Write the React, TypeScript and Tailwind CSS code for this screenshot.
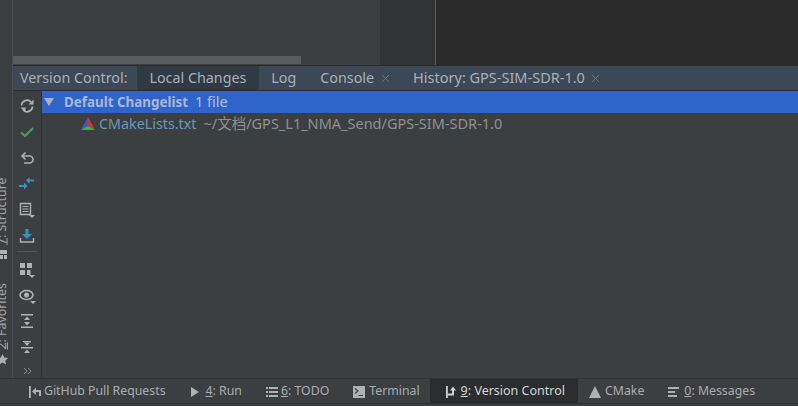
const font = { fontFamily: '"Noto Sans", "Noto Sans CJK SC", sans-serif' };

function Sync() {
  return (
    <svg width="16" height="16" viewBox="0 0 16 16" fill="none" stroke="#afb1b3" strokeWidth="1.700">
      <path d="M2.500 7.500A5.500 5.500 0 0 1 12 4" />
      <path d="M13.500 8.500A5.500 5.500 0 0 1 4 12" />
      <path d="M9.500 6.500h5v-5z" fill="#afb1b3" stroke="none" />
      <path d="M1.500 9.500h5v5z" fill="#afb1b3" stroke="none" />
    </svg>
  );
}
function Check() {
  return (
    <svg width="16" height="16" viewBox="0 0 16 16" fill="none" stroke="#499c54" strokeWidth="2.200">
      <path d="M2 8.500l4 3.500 8-8" />
    </svg>
  );
}
function Undo() {
  return (
    <svg width="16" height="16" viewBox="0 0 16 16" fill="none" stroke="#afb1b3" strokeWidth="1.600">
      <path d="M4 6h6.500a3.500 3.500 0 0 1 0 7H5" />
      <path d="M6.500 2.500L3 6l3.500 3.500" />
    </svg>
  );
}
function Merge() {
  return (
    <svg width="16" height="16" viewBox="0 0 16 16" fill="#3592c4">
      <path d="M0 9h5V6.500l3.500 3.500L5 13.500V11H0z" />
      <path d="M15 3.500h-4.500V1L7 4.500 10.500 8V5.500H15z" />
    </svg>
  );
}
function Note() {
  return (
    <svg width="16" height="16" viewBox="0 0 16 16" fill="none" stroke="#afb1b3">
      <path d="M1.500 1.500h10v11h-10z" strokeWidth="1.400" />
      <path d="M3.500 4.500h6M3.500 7h6M3.500 9.500h6" strokeWidth="1.200" />
      <path d="M10 13h6l-3 3z" fill="#afb1b3" stroke="none" />
    </svg>
  );
}
function Download() {
  return (
    <svg width="16" height="16" viewBox="0 0 16 16" fill="none">
      <path d="M1.500 10v4h13v-4" stroke="#afb1b3" strokeWidth="1.400" />
      <path d="M6.500 1h3v5H13l-5 5-5-5h3.500z" fill="#3592c4" />
    </svg>
  );
}
function Group() {
  return (
    <svg width="16" height="16" viewBox="0 0 16 16" fill="#afb1b3">
      <rect x="1" y="1" width="5" height="5" />
      <rect x="8" y="1" width="5" height="5" />
      <rect x="1" y="8" width="5" height="5" />
      <rect x="8" y="8" width="3.500" height="5" />
      <path d="M10 13h6l-3 3z" />
    </svg>
  );
}
function Eye() {
  return (
    <svg width="17" height="16" viewBox="0 0 17 16" fill="none">
      <ellipse cx="7.500" cy="7" rx="6.500" ry="4.500" stroke="#afb1b3" strokeWidth="1.600" />
      <circle cx="7.500" cy="7" r="2.500" fill="#afb1b3" />
      <path d="M11 13h6l-3 3z" fill="#afb1b3" />
    </svg>
  );
}
function Expand() {
  return (
    <svg width="14" height="16" viewBox="0 0 14 16" fill="#afb1b3">
      <rect x="1" y="0" width="12" height="1.500" />
      <rect x="1" y="12.500" width="12" height="1.500" />
      <path d="M7 2.500l3 3.500H4zM7 11.500L4 8h6z" />
    </svg>
  );
}
function Collapse() {
  return (
    <svg width="14" height="16" viewBox="0 0 14 16" fill="#afb1b3">
      <rect x="1" y="7" width="12" height="1.500" />
      <path d="M7 6L4 2.500h6zM7 9.500l3 3.500H4z" />
      <rect x="3" y="1" width="8" height="1.200" />
    </svg>
  );
}
function CMakeLogo() {
  return (
    <svg width="14" height="14" viewBox="0 0 14 14" className="shrink-0">
      <path d="M7 0L0 13l7-4z" fill="#3b5bd6" />
      <path d="M7 0l7 13-7-4z" fill="#d8322f" />
      <path d="M0 13h14L7 9z" fill="#2fc02f" />
    </svg>
  );
}
function PullIcon() {
  return (
    <svg width="12" height="14" viewBox="0 0 12 14" fill="#afb1b3">
      <rect x="0" y="1" width="1.800" height="12" />
      <path d="M3 6.500L7 2.500v2.500h5V11h-2V7H7v3z" />
    </svg>
  );
}
function RunIcon() {
  return (
    <svg width="13" height="12" viewBox="0 0 13 12" fill="#afb1b3">
      <path d="M1 1l8 5-8 5z" />
    </svg>
  );
}
function TodoIcon() {
  return (
    <svg width="12" height="12" viewBox="0 0 12 12" fill="#afb1b3">
      <path d="M0 1h2v2H0zM3 1h9v2H3zM0 5h2v2H0zM3 5h9v2H3zM0 9h2v2H0zM3 9h9v2H3z" />
    </svg>
  );
}
function TermIcon() {
  return (
    <svg width="13" height="12" viewBox="0 0 13 12">
      <rect width="12" height="12" fill="#afb1b3" />
      <path d="M2 2.500L5 5 2 7.500" stroke="#3c3f41" strokeWidth="1.100" fill="none" />
      <path d="M5.500 9.500H10" stroke="#3c3f41" strokeWidth="1" />
    </svg>
  );
}
function VcsIcon() {
  return (
    <svg width="12" height="14" viewBox="0 0 12 14" fill="#d0d2d4">
      <rect x="0" y="1" width="1.800" height="12" />
      <path d="M1.500 8.500H6V5.500H4L7 1.500l3 4H8v5H1.500z" />
    </svg>
  );
}
function CMakeIcon() {
  return (
    <svg width="13" height="12" viewBox="0 0 13 12" fill="#afb1b3">
      <path d="M6 0l6 12H0z" />
    </svg>
  );
}
function MsgIcon() {
  return (
    <svg width="13" height="12" viewBox="0 0 13 12" fill="#afb1b3">
      <path d="M0 1h11v2H0zM0 5h7v2H0zM0 9h9v2H0z" />
    </svg>
  );
}
function Close() {
  return (
    <svg width="9" height="9" viewBox="0 0 9 9" stroke="#6e7376" strokeWidth="1">
      <path d="M1 1l7 7M8 1L1 8" />
    </svg>
  );
}
function More() {
  return (
    <svg width="9" height="8" viewBox="0 0 9 8" fill="none" stroke="#8c9093" strokeWidth="1">
      <path d="M1 1l3 3-3 3M5 1l3 3-3 3" />
    </svg>
  );
}

function ToolButton({ children }: { children: React.ReactNode }) {
  return <div className="flex h-[26px] w-full items-center justify-center">{children}</div>;
}

function BottomTab({
  icon,
  label,
  mnemonic,
  active,
}: {
  icon: React.ReactNode;
  label: string;
  mnemonic?: string;
  active?: boolean;
}) {
  return (
    <div
      className={`flex h-full items-center gap-[3px] pt-[1px] ${
        active
          ? "ml-[-2px] mr-[-1px] bg-[#2b2d2e] pl-[16px] pr-[13px] text-[12.5px] text-[#d4d6d8]"
          : "px-[12px] text-[12.3px] text-[#a9adb0]"
      }`}
    >
      {icon}
      <span>
        {mnemonic && <span className="underline">{mnemonic}</span>}
        {mnemonic && ": "}
        {label}
      </span>
    </div>
  );
}

export default function App() {
  return (
    <div style={font} className="flex h-[406px] w-[798px] flex-col overflow-hidden bg-[#3c3f41] text-[#a9b7c6]">
      <div className="flex min-h-0 flex-1">
        <div className="relative w-[13px] shrink-0 overflow-hidden border-r border-[#4b4e50] bg-[#3c3f41]">
          <div className="absolute left-[-5px] top-[171px] flex h-[80px] w-[14px] items-center justify-center">
            <span className="block rotate-[-90deg] whitespace-nowrap text-[12.4px] text-[#a2a6a9]">
              <span className="underline">7</span>: Structure
            </span>
          </div>
          <div className="absolute left-[-5px] top-[276px] flex h-[80px] w-[14px] items-center justify-center">
            <span className="block rotate-[-90deg] whitespace-nowrap text-[12.4px] text-[#a2a6a9]">
              <span className="underline">2</span>: Favorites
            </span>
          </div>
          <svg width="8" height="10" viewBox="0 0 8 10" fill="#afb1b3" className="absolute left-0 top-[250px]">
            <path d="M0 0h7v4H0zM0 5h3v4H0zM4 5h3v4H4z" />
          </svg>
          <svg width="11" height="11" viewBox="0 0 11 11" fill="#afb1b3" className="absolute left-[-3px] top-[354px]">
            <path d="M5.500 0l1.700 3.600 3.800.5-2.800 2.600.8 3.800-3.500-1.900L2 10.500l.8-3.800L0 4.100l3.800-.5z" />
          </svg>
        </div>
        <div className="flex min-w-0 flex-1 flex-col">
          <div className="flex h-[66px] shrink-0 border-b border-[#2b2b2b]">
            <div className="flex w-[367px] flex-col justify-end bg-[#3c3f41]">
              <div className="mb-[1px] h-[8px] w-[288px] bg-[#5a5c5e]" />
            </div>
            <div className="w-[56px] border-r border-[#5a5c5e] bg-[#313335]" />
            <div className="flex-1 bg-[#2b2b2b]" />
          </div>
          <div className="flex h-[25px] shrink-0 items-center border-b border-[#2b2d2e] bg-[#3d4856] text-[14.3px] text-[#a9b0b8]">
            <span className="pl-[7px] pr-[10px]">Version Control:</span>
            <div className="flex h-full items-center bg-[#2f3a44] pl-[12px] pr-[13px]">Local Changes</div>
            <div className="px-[12px]">Log</div>
            <div className="flex items-center gap-[7px] pl-[12px] pr-[12px]">
              Console <Close />
            </div>
            <div className="flex items-center gap-[6px] pl-[11px] text-[14.5px]">
              History: GPS-SIM-SDR-1.0 <Close />
            </div>
          </div>
          <div className="flex min-h-0 flex-1">
            <div className="flex w-[29px] shrink-0 flex-col items-center border-r border-[#323232] pt-[2px]">
              <ToolButton><Sync /></ToolButton>
              <ToolButton><Check /></ToolButton>
              <ToolButton><Undo /></ToolButton>
              <ToolButton><Merge /></ToolButton>
              <ToolButton><Note /></ToolButton>
              <ToolButton><Download /></ToolButton>
              <div className="mb-[5px] mt-[2px] h-px w-[20px] bg-[#515658]" />
              <ToolButton><Group /></ToolButton>
              <ToolButton><Eye /></ToolButton>
              <ToolButton><Expand /></ToolButton>
              <ToolButton><Collapse /></ToolButton>
              <div className="mt-[3px] flex h-[14px] items-center"><More /></div>
            </div>
            <div className="min-w-0 flex-1">
              <div className="flex h-[22px] items-center bg-[#2f65ca] pl-[2px] text-[14.5px]">
                <svg width="10" height="8" viewBox="0 0 10 8" className="mr-[10px]">
                  <path d="M0 0h10L5 8z" fill="#afb1b3" />
                </svg>
                <span className="text-[13.400px] font-bold text-[#a9b7d6]">Default Changelist</span>
                <span className="ml-[7px] text-[#b5bfd8]">1 file</span>
              </div>
              <div className="flex h-[22px] items-center pl-[39px] text-[14.5px]">
                <CMakeLogo />
                <span className="ml-[4px] text-[14.3px] text-[#6897bb]">CMakeLists.txt</span>
                <span className="ml-[7px] text-[#8e9193]">~/文档/GPS_L1_NMA_Send/GPS-SIM-SDR-1.0</span>
              </div>
            </div>
          </div>
        </div>
      </div>
      <div className="flex h-[28px] shrink-0 flex-col border-t border-[#323232]">
        <div className="flex h-[24px] items-stretch pl-[17px]">
          <BottomTab icon={<PullIcon />} label="GitHub Pull Requests" />
          <BottomTab icon={<RunIcon />} mnemonic="4" label="Run" />
          <BottomTab icon={<TodoIcon />} mnemonic="6" label="TODO" />
          <BottomTab icon={<TermIcon />} label="Terminal" />
          <BottomTab icon={<VcsIcon />} mnemonic="9" label="Version Control" active />
          <BottomTab icon={<CMakeIcon />} label="CMake" />
          <BottomTab icon={<MsgIcon />} mnemonic="0" label="Messages" />
        </div>
        <div className="flex-1 border-t border-[#323232]" />
      </div>
    </div>
  );
}
